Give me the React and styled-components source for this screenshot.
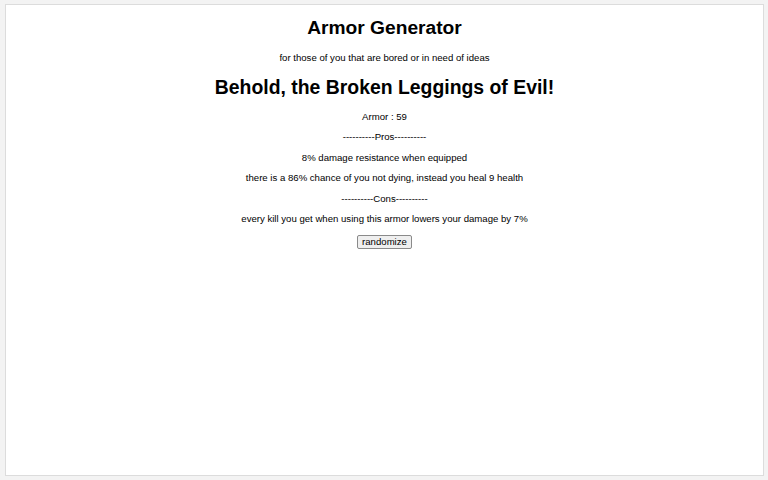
import React, { useState } from 'react';
import styled, { createGlobalStyle } from 'styled-components';

const GlobalStyle = createGlobalStyle`
  html, body {
    margin: 0;
    padding: 0;
    background: #f3f3f3;
    font-family: "Liberation Sans", Arial, sans-serif;
  }
`;

const Frame = styled.div`
  padding: 4px 4px 4px 5px;
`;

const Panel = styled.main`
  box-sizing: border-box;
  height: 472px;
  background: #fff;
  border: 1px solid #dcdcdc;
  text-align: center;
  color: #000;
  padding-top: 1px;
`;

const Title = styled.h1`
  font-size: ${(p) => (p.$first ? '19.2px' : '19.4px')};
  font-weight: bold;
  margin: ${(p) => (p.$first ? '11px 0 13px' : '12px 0 13px')};
  line-height: 22px;
`;

const Line = styled.p`
  font-size: 9.6px;
  line-height: 11.5px;
  margin: 9px 0;
`;

const ButtonRow = styled.div`
  display: flex;
  justify-content: center;
  margin-top: 10px;
`;

const RandomButton = styled.button`
  font-family: "Liberation Sans", Arial, sans-serif;
  font-size: 9.6px;
  line-height: 12px;
  padding: 0 4px;
  margin: 0;
  color: #000;
  background: #efefef;
  border: 1px solid #8a8a8a;
  border-radius: 2px;
`;

const armor = {
  name: 'the Broken Leggings of Evil',
  value: 59,
  pros: [
    '8% damage resistance when equipped',
    'there is a 86% chance of you not dying, instead you heal 9 health',
  ],
  cons: ['every kill you get when using this armor lowers your damage by 7%'],
};

const App = () => {
  const [item] = useState(armor);

  return (
    <Frame>
      <GlobalStyle />
      <Panel>
        <Title $first>Armor Generator</Title>
        <Line>for those of you that are bored or in need of ideas</Line>
        <Title>Behold, {item.name}!</Title>
        <Line>Armor : {item.value}</Line>
        <Line>----------Pros----------</Line>
        {item.pros.map((p) => (
          <Line key={p}>{p}</Line>
        ))}
        <Line>----------Cons----------</Line>
        {item.cons.map((c) => (
          <Line key={c}>{c}</Line>
        ))}
        <ButtonRow>
          <RandomButton>randomize</RandomButton>
        </ButtonRow>
      </Panel>
    </Frame>
  );
};

export default App;
